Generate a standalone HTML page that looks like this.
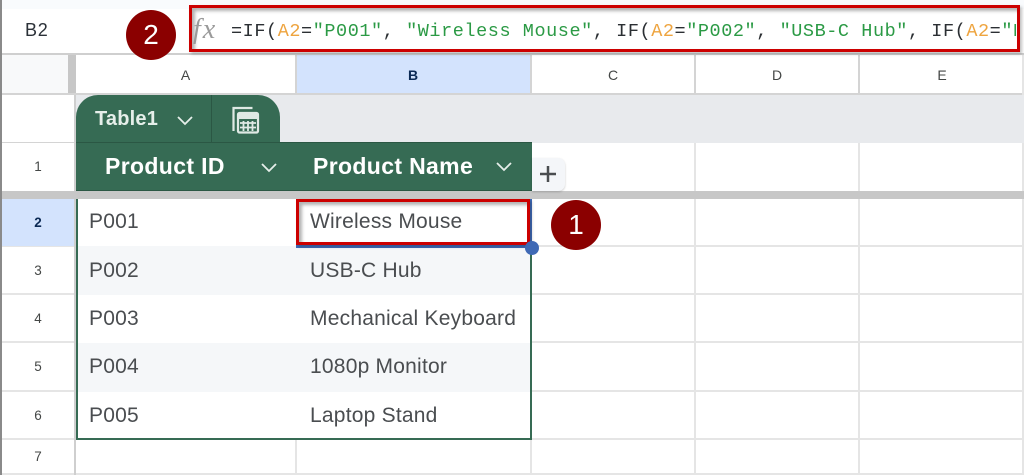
<!DOCTYPE html>
<html>
<head>
<meta charset="utf-8">
<style>
html,body{margin:0;padding:0;background:#fff}
#p{position:relative;width:1024px;height:475px;overflow:hidden;background:#fff;font-family:"Liberation Sans",sans-serif}
#p div{position:absolute}
.h{background:#e5e5e5;height:2px;left:0;right:0}
.v{background:#e5e5e5;width:2px}
.cl{top:60px;height:30px;line-height:30px;text-align:center;font-size:14px;color:#444746}
.rn{left:2px;width:72px;text-align:center;font-size:13.5px;color:#444746;height:20px;line-height:20px}
.t{font-size:21px;color:#4a4d50;height:24px;line-height:24px;white-space:pre;letter-spacing:.22px}
.hd{font-size:23px;font-weight:bold;color:#fff;height:28px;line-height:28px;white-space:pre;letter-spacing:.35px}
.badge{background:#8b0000;border-radius:50%;width:50px;height:50px;color:#fff;text-align:center;line-height:50px;font-size:28px}
.r{color:#2b2f33}.o{color:#eea43f}.g{color:#2b9a45}
</style>
</head>
<body>
<div id="p">
  <div style="left:0;top:0;width:1024px;height:9px;background:#f9fbfd"></div>
  <div style="left:0;top:0;width:2px;height:475px;background:#8a8a8a"></div>

  <!-- name box -->
  <div style="left:25px;top:19px;font-size:18px;letter-spacing:.8px;color:#2b3138;height:22px;line-height:22px">B2</div>

  <!-- header row -->
  <div style="left:2px;top:53px;width:1022px;height:2px;background:#cfcfcf"></div>
  <div style="left:2px;top:55px;width:66px;height:38px;background:#f8f9fa"></div>
  <div style="left:68px;top:55px;width:8px;height:38px;background:#c7c7c7"></div>
  <div style="left:296px;top:55px;width:235px;height:38px;background:#d3e3fd"></div>
  <div style="left:2px;top:93px;width:1022px;height:2px;background:#d4d4d4"></div>
  <div class="v" style="left:295px;top:55px;height:38px;background:#d4d4d4"></div>
  <div class="v" style="left:694px;top:55px;height:38px;background:#d4d4d4"></div>
  <div class="v" style="left:858px;top:55px;height:38px;background:#d4d4d4"></div>
  <div class="v" style="left:530px;top:55px;height:38px;background:#d4d4d4"></div>
  <div class="cl" style="left:76px;width:219px">A</div>
  <div class="cl" style="left:296px;width:234px;color:#0b2a55;font-weight:bold">B</div>
  <div class="cl" style="left:532px;width:162px">C</div>
  <div class="cl" style="left:696px;width:162px">D</div>
  <div class="cl" style="left:860px;width:164px">E</div>

  <!-- grid -->
  <div class="h" style="top:245px;left:2px"></div>
  <div class="h" style="top:293px;left:2px"></div>
  <div class="h" style="top:341px;left:2px"></div>
  <div class="h" style="top:390px;left:2px"></div>
  <div class="h" style="top:438px;left:2px"></div>
  <div class="h" style="top:473px;left:2px"></div>
  <div class="v" style="left:694px;top:143px;height:332px"></div>
  <div class="v" style="left:858px;top:143px;height:332px"></div>
  <div class="v" style="left:1022px;top:55px;height:420px"></div>
  <div class="v" style="left:295px;top:440px;height:35px"></div>
  <div class="v" style="left:530px;top:440px;height:35px"></div>
  <div class="v" style="left:74px;top:95px;height:380px;background:#cfcfcf"></div>

  <!-- table strip -->
  <div style="left:76px;top:95px;width:948px;height:48px;background:#e8eaed"></div>
  <div style="left:2px;top:142px;width:72px;height:1px;background:#d4d4d4"></div>
  <div style="left:76px;top:95px;width:204px;height:47px;background:#366b54;border-radius:22px 22px 0 0"></div>
  <div style="left:211px;top:95px;width:1px;height:47px;background:#2b5744"></div>
  <div style="left:95px;top:106px;font-size:20px;font-weight:bold;letter-spacing:.2px;color:#e6efea;height:26px;line-height:26px">Table1</div>
  <svg style="position:absolute;left:175px;top:114px" width="20" height="14" viewBox="0 0 20 14"><path d="M3 3l7 7 7-7" fill="none" stroke="#e6efea" stroke-width="1.800"/></svg>
  <svg style="position:absolute;left:231px;top:106px" width="29" height="28" viewBox="0 0 29 28" fill="none" stroke="#dfe9e4">
    <path d="M2.500 25V2h19" stroke-width="2.200"/>
    <rect x="7" y="7" width="20" height="19.500" rx="1.500" stroke-width="2.200"/>
    <rect x="7" y="7" width="20" height="6" fill="#dfe9e4" stroke="none"/>
    <path d="M9 17h16M9 21.500h16M12.500 15v10M17 15v10M21.500 15v10" stroke-width="1.800"/>
  </svg>

  <!-- table header -->
  <div style="left:76px;top:142px;width:456px;height:49px;background:#366b54;border-top:1px solid #2b5744;box-sizing:border-box;border-bottom:1px solid #2b5744"></div>
  <div class="hd" style="left:105px;top:152px">Product ID</div>
  <div class="hd" style="left:313px;top:152px">Product Name</div>
  <svg style="position:absolute;left:259px;top:161px" width="20" height="14" viewBox="0 0 20 14"><path d="M3 3l7 7 7-7" fill="none" stroke="#e6efea" stroke-width="1.800"/></svg>
  <svg style="position:absolute;left:494px;top:160px" width="20" height="14" viewBox="0 0 20 14"><path d="M3 3l7 7 7-7" fill="none" stroke="#e6efea" stroke-width="1.800"/></svg>

  <!-- freeze bar -->
  <div style="left:2px;top:191px;width:1022px;height:8px;background:#c7c7c7"></div>

  <!-- plus button -->
  <div style="left:532px;top:158px;width:33px;height:33px;background:#f4f6f9;border-radius:0 7px 7px 0;box-shadow:0 1px 2px rgba(0,0,0,.2)"></div>
  <svg style="position:absolute;left:538px;top:164px" width="20" height="20" viewBox="0 0 20 20"><path d="M10 2v16M2 10h16" stroke="#4a4d50" stroke-width="2.500"/></svg>

  <!-- row headers -->
  <div style="left:2px;top:199px;width:72px;height:47px;background:#d3e3fd"></div>
  <div class="rn" style="top:157px">1</div>
  <div class="rn" style="top:213px;color:#0b2a55;font-weight:bold">2</div>
  <div class="rn" style="top:261px">3</div>
  <div class="rn" style="top:309px">4</div>
  <div class="rn" style="top:357px">5</div>
  <div class="rn" style="top:406px">6</div>
  <div class="rn" style="top:447px">7</div>

  <!-- table body -->
  <div style="left:76px;top:199px;width:456px;height:241px;box-sizing:border-box;border:2px solid #366b54;border-top:0;background:#fff"></div>
  <div style="left:78px;top:246px;width:452px;height:49px;background:#f5f7f9"></div>
  <div style="left:78px;top:343px;width:452px;height:49px;background:#f5f7f9"></div>

  <div class="t" style="left:89px;top:210px">P001</div>
  <div class="t" style="left:89px;top:259px">P002</div>
  <div class="t" style="left:89px;top:307px">P003</div>
  <div class="t" style="left:89px;top:355px">P004</div>
  <div class="t" style="left:89px;top:404px">P005</div>
  <div class="t" style="left:310px;top:210px">Wireless Mouse</div>
  <div class="t" style="left:310px;top:259px">USB-C Hub</div>
  <div class="t" style="left:310px;top:307px">Mechanical Keyboard</div>
  <div class="t" style="left:310px;top:355px">1080p Monitor</div>
  <div class="t" style="left:310px;top:404px">Laptop Stand</div>

  <!-- selected cell -->
  <div style="left:296px;top:245px;width:236px;height:3px;background:#3f69b5"></div>
  <div style="left:529px;top:199px;width:3px;height:48px;background:#3f69b5"></div>
  <div style="left:296px;top:199px;width:234px;height:46px;box-sizing:border-box;border:3px solid #cc0000;box-shadow:inset 3px 3px 3px rgba(0,0,0,.3),2px 2px 3px rgba(0,0,0,.2)"></div>
  <div style="left:525px;top:241px;width:14px;height:14px;border-radius:50%;background:#3f69b5"></div>

  <!-- formula box -->
  <div style="left:189px;top:5px;width:831px;height:47px;box-sizing:border-box;border:3px solid #cc0000;background:#fff;box-shadow:inset 3px 3px 3px rgba(0,0,0,.3),2px 2px 3px rgba(0,0,0,.25)"></div>
  <div style="left:193px;top:15px;font-family:'Liberation Serif',serif;font-style:italic;font-size:28px;letter-spacing:2px;color:#9a9a9a;height:30px;line-height:30px">fx</div>
  <div style="left:231px;top:20px;width:785px;height:24px;line-height:24px;overflow:hidden;white-space:pre;font-family:'Liberation Mono',monospace;font-size:18.5px;letter-spacing:.57px;color:#2b2f33"><span class="r">=IF(</span><span class="o">A2</span><span class="r">=</span><span class="g">"P001"</span><span class="r">, </span><span class="g">"Wireless Mouse"</span><span class="r">, IF(</span><span class="o">A2</span><span class="r">=</span><span class="g">"P002"</span><span class="r">, </span><span class="g">"USB-C Hub"</span><span class="r">, IF(</span><span class="o">A2</span><span class="r">=</span><span class="g">"P003"</span></div>

  <!-- badges -->
  <div class="badge" style="left:126px;top:10px">2</div>
  <div class="badge" style="left:551px;top:200px">1</div>
</div>
</body>
</html>
